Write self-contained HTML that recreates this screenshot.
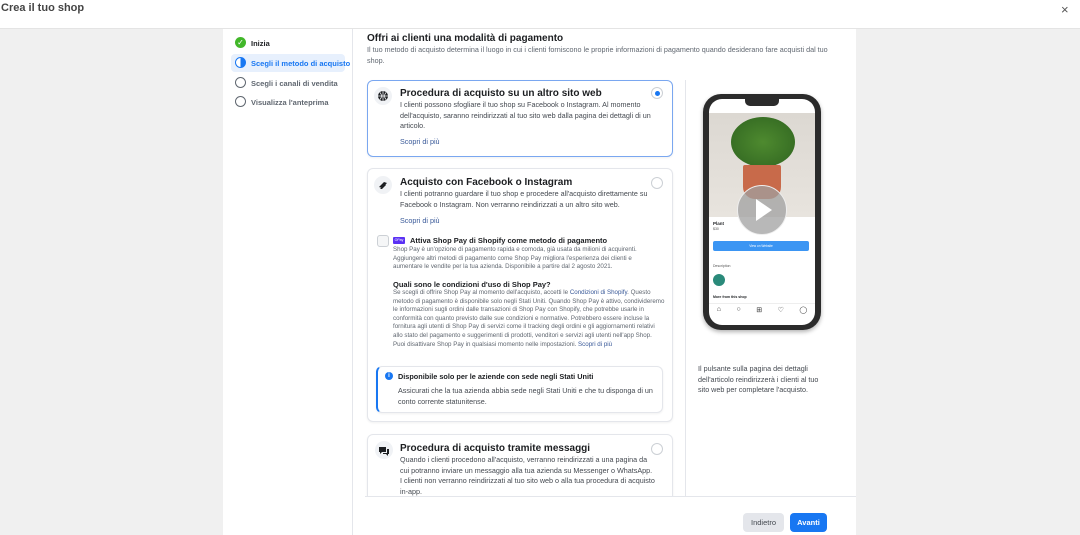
<!DOCTYPE html>
<html><head><meta charset="utf-8"><style>
*{box-sizing:border-box;margin:0;padding:0}
body{width:1080px;height:535px;overflow:hidden;background:#f0f0f0;font-family:"Liberation Sans",sans-serif;color:#1c1e21;position:relative}
.abs{position:absolute}
.hdr{left:0;top:0;width:1080px;height:29px;background:#fff;border-bottom:1px solid #e4e4e4}
.panel{left:223px;top:29px;width:633px;height:506px;background:#fff}
.nav{font-size:7.5px;font-weight:bold;color:#606770}
.card{border:1px solid #e4e6eb;border-radius:6px;background:#fff;box-shadow:0 1px 2px rgba(0,0,0,.06)}
.t{font-size:10px;font-weight:bold;color:#1c1e21}
.p{font-size:7.2px;line-height:10.5px;color:#444950}
.s{font-size:6.2px;line-height:8.6px;color:#606770}
.lnk{color:#385898}
.radio{width:12px;height:12px;border-radius:50%;border:1px solid #ccd0d5;background:#fff}
.ic{width:18px;height:18px;border-radius:50%;background:#f0f2f5}
</style></head><body>
<div class="abs hdr"></div>
<div class="abs" style="left:1px;top:2px;font-size:11px;font-weight:bold;color:#444">Crea il tuo shop</div>
<div class="abs" style="left:1061px;top:2px;font-size:13px;color:#555">×</div>
<div class="abs panel"></div>
<!-- nav -->
<div class="abs" style="left:352px;top:29px;width:1px;height:506px;background:#e4e6eb"></div>
<div class="abs" style="left:235px;top:37px;width:11px;height:11px;border-radius:50%;background:#42b72a;color:#fff;font-size:8px;text-align:center;line-height:11px">✓</div>
<div class="abs nav" style="left:251px;top:39px;color:#1c1e21">Inizia</div>
<div class="abs" style="left:231px;top:54px;width:114px;height:18px;border-radius:4px;background:#e7f0fd"></div>
<div class="abs" style="left:235px;top:57px;width:11px;height:11px;border-radius:50%;border:1.3px solid #1877f2;background:linear-gradient(90deg,#fff 50%,#1877f2 50%)"></div>
<div class="abs nav" style="left:251px;top:59px;color:#1877f2">Scegli il metodo di acquisto</div>
<div class="abs" style="left:235px;top:77px;width:11px;height:11px;border-radius:50%;border:1.3px solid #606770"></div>
<div class="abs nav" style="left:251px;top:79px">Scegli i canali di vendita</div>
<div class="abs" style="left:235px;top:96px;width:11px;height:11px;border-radius:50%;border:1.3px solid #606770"></div>
<div class="abs nav" style="left:251px;top:98px">Visualizza l'anteprima</div>
<!-- heading -->
<div class="abs t" style="left:367px;top:33px;font-size:10px">Offri ai clienti una modalità di pagamento</div>
<div class="abs p" style="left:367px;top:45px;width:470px;color:#606770">Il tuo metodo di acquisto determina il luogo in cui i clienti forniscono le proprie informazioni di pagamento quando desiderano fare acquisti dal tuo shop.</div>
<!-- card1 -->
<div class="abs card" style="left:367px;top:80px;width:306px;height:77px;border-color:#7aa7f0"></div>
<div class="abs ic" style="left:374px;top:87px"><svg width="18" height="18" viewBox="0 0 18 18"><circle cx="9" cy="9" r="5" fill="#1c1e21"/><path d="M4 9h10M9 4v10M6 5.5q3 3.5 0 7M12 5.5q-3 3.5 0 7" stroke="#f0f2f5" stroke-width=".8" fill="none"/></svg></div>
<div class="abs t" style="left:400px;top:88px">Procedura di acquisto su un altro sito web</div>
<div class="abs p" style="left:400px;top:100px;width:255px">I clienti possono sfogliare il tuo shop su Facebook o Instagram. Al momento dell'acquisto, saranno reindirizzati al tuo sito web dalla pagina dei dettagli di un articolo.</div>
<div class="abs p lnk" style="left:400px;top:137px">Scopri di più</div>
<div class="abs radio" style="left:651px;top:87px"></div>
<div class="abs" style="left:655px;top:91px;width:5px;height:5px;border-radius:50%;background:#1877f2"></div>
<!-- card2 -->
<div class="abs card" style="left:367px;top:168px;width:306px;height:254px"></div>
<div class="abs ic" style="left:374px;top:176px"><svg width="18" height="18" viewBox="0 0 18 18"><path d="M5 11l5-5 3 1-5 5z M6 13l5-5 1 1-4 4z" fill="#1c1e21"/></svg></div>
<div class="abs t" style="left:400px;top:177px">Acquisto con Facebook o Instagram</div>
<div class="abs p" style="left:400px;top:189px;width:262px">I clienti potranno guardare il tuo shop e procedere all'acquisto direttamente su Facebook o Instagram. Non verranno reindirizzati a un altro sito web.</div>
<div class="abs p lnk" style="left:400px;top:216px">Scopri di più</div>
<div class="abs radio" style="left:651px;top:177px"></div>
<div class="abs" style="left:377px;top:235px;width:12px;height:12px;border-radius:3px;border:1px solid #ccd0d5;background:#f5f6f7"></div>
<div class="abs" style="left:393px;top:237px;width:12px;height:7px;background:#5a31f4;border-radius:1px;color:#fff;font-size:3.5px;line-height:7px;text-align:center">OPay</div>
<div class="abs" style="left:410px;top:236px;font-size:7.5px;font-weight:bold">Attiva Shop Pay di Shopify come metodo di pagamento</div>
<div class="abs s" style="left:393px;top:246px;width:245px">Shop Pay è un'opzione di pagamento rapida e comoda, già usata da milioni di acquirenti. Aggiungere altri metodi di pagamento come Shop Pay migliora l'esperienza dei clienti e aumentare le vendite per la tua azienda. Disponibile a partire dal 2 agosto 2021.</div>
<div class="abs" style="left:393px;top:280px;font-size:7.5px;font-weight:bold">Quali sono le condizioni d'uso di Shop Pay?</div>
<div class="abs s" style="left:393px;top:289px;width:272px">Se scegli di offrire Shop Pay al momento dell'acquisto, accetti le <span class="lnk">Condizioni di Shopify</span>. Questo metodo di pagamento è disponibile solo negli Stati Uniti. Quando Shop Pay è attivo, condivideremo le informazioni sugli ordini dalle transazioni di Shop Pay con Shopify, che potrebbe usarle in conformità con quanto previsto dalle sue condizioni e normative. Potrebbero essere incluse la fornitura agli utenti di Shop Pay di servizi come il tracking degli ordini e gli aggiornamenti relativi allo stato del pagamento e suggerimenti di prodotti, venditori e servizi agli utenti nell'app Shop. Puoi disattivare Shop Pay in qualsiasi momento nelle impostazioni. <span class="lnk">Scopri di più</span></div>
<div class="abs card" style="left:376px;top:366px;width:287px;height:47px;border-left:2px solid #1877f2"></div>
<div class="abs" style="left:385px;top:372px;width:8px;height:8px;border-radius:50%;background:#1877f2;color:#fff;font-size:6px;text-align:center;line-height:8px;font-weight:bold">i</div>
<div class="abs" style="left:398px;top:372px;font-size:7.3px;font-weight:bold">Disponibile solo per le aziende con sede negli Stati Uniti</div>
<div class="abs p" style="left:398px;top:386px;width:262px">Assicurati che la tua azienda abbia sede negli Stati Uniti e che tu disponga di un conto corrente statunitense.</div>
<!-- card3 -->
<div class="abs card" style="left:367px;top:434px;width:306px;height:70px"></div>
<div class="abs ic" style="left:375px;top:441px"><svg width="18" height="18" viewBox="0 0 18 18"><path d="M4 6h7v5H7l-2 2v-2H4z" fill="#1c1e21"/><path d="M12 8h2v5h-1v2l-2-2H8v-1h4z" fill="#1c1e21"/></svg></div>
<div class="abs t" style="left:400px;top:443px">Procedura di acquisto tramite messaggi</div>
<div class="abs p" style="left:400px;top:455px;width:255px">Quando i clienti procedono all'acquisto, verranno reindirizzati a una pagina da cui potranno inviare un messaggio alla tua azienda su Messenger o WhatsApp. I clienti non verranno reindirizzati al tuo sito web o alla tua procedura di acquisto in-app.</div>
<div class="abs radio" style="left:651px;top:443px"></div>
<!-- right divider -->
<div class="abs" style="left:685px;top:80px;width:1px;height:416px;background:#e4e6eb"></div>
<!-- footer -->
<div class="abs" style="left:365px;top:496px;width:491px;height:39px;background:#fff;border-top:1px solid #e4e6eb"></div>
<div class="abs" style="left:743px;top:513px;width:41px;height:19px;border-radius:4px;background:#e4e6eb;font-size:7.5px;color:#444950;text-align:center;line-height:19px">Indietro</div>
<div class="abs" style="left:790px;top:513px;width:37px;height:19px;border-radius:4px;background:#1877f2;font-size:7.5px;color:#fff;font-weight:bold;text-align:center;line-height:19px">Avanti</div>
<!-- phone -->
<div class="abs" style="left:703px;top:94px;width:118px;height:236px;border-radius:18px;background:#2b2b2b;box-shadow:0 2px 4px rgba(0,0,0,.3)"></div>
<div class="abs" style="left:709px;top:99px;width:106px;height:226px;border-radius:13px;background:#fff;overflow:hidden">
 <div style="position:absolute;left:0;top:14px;width:106px;height:104px;background:linear-gradient(#dcd8d2,#e8e4de)"></div>
 <div style="position:absolute;left:22px;top:18px;width:64px;height:50px;border-radius:50%;background:radial-gradient(#4e8a2f,#2f6420)"></div>
 <div style="position:absolute;left:34px;top:66px;width:38px;height:34px;border-radius:2px 2px 12px 12px;background:#c86a4a"></div>
 <div style="position:absolute;left:28px;top:86px;width:50px;height:50px;border-radius:50%;background:rgba(160,160,160,.75);border:1.5px solid #eee"></div>
 <div style="position:absolute;left:47px;top:100px;width:0;height:0;border-left:16px solid #fff;border-top:11px solid transparent;border-bottom:11px solid transparent"></div>
 <div style="position:absolute;left:4px;top:122px;font-size:4.5px;font-weight:bold">Plant</div>
 <div style="position:absolute;left:4px;top:128px;font-size:3.5px;color:#555">$30</div>
 <div style="position:absolute;left:4px;top:142px;width:96px;height:10px;border-radius:2px;background:#3b95f3;color:#fff;font-size:3.2px;text-align:center;line-height:10px">View on Website</div>
 <div style="position:absolute;left:4px;top:165px;font-size:3.5px;color:#555">Description</div>
 <div style="position:absolute;left:4px;top:175px;width:12px;height:12px;border-radius:50%;background:#2a8a7a"></div>
 <div style="position:absolute;left:4px;top:196px;font-size:3.5px;font-weight:bold">More from this shop</div>
 <div style="position:absolute;left:0;top:204px;width:106px;height:1px;background:#eee"></div>
 <div style="position:absolute;left:0;top:207px;width:106px;font-size:7px;color:#333;display:flex;justify-content:space-around">⌂<span>○</span><span>⊞</span><span>♡</span><span>◯</span></div>
 <div style="position:absolute;left:36px;top:0;width:34px;height:7px;background:#2b2b2b;border-radius:0 0 5px 5px"></div>
</div>
<div class="abs p" style="left:698px;top:364px;width:130px;color:#444950">Il pulsante sulla pagina dei dettagli dell'articolo reindirizzerà i clienti al tuo sito web per completare l'acquisto.</div>
</body></html>
